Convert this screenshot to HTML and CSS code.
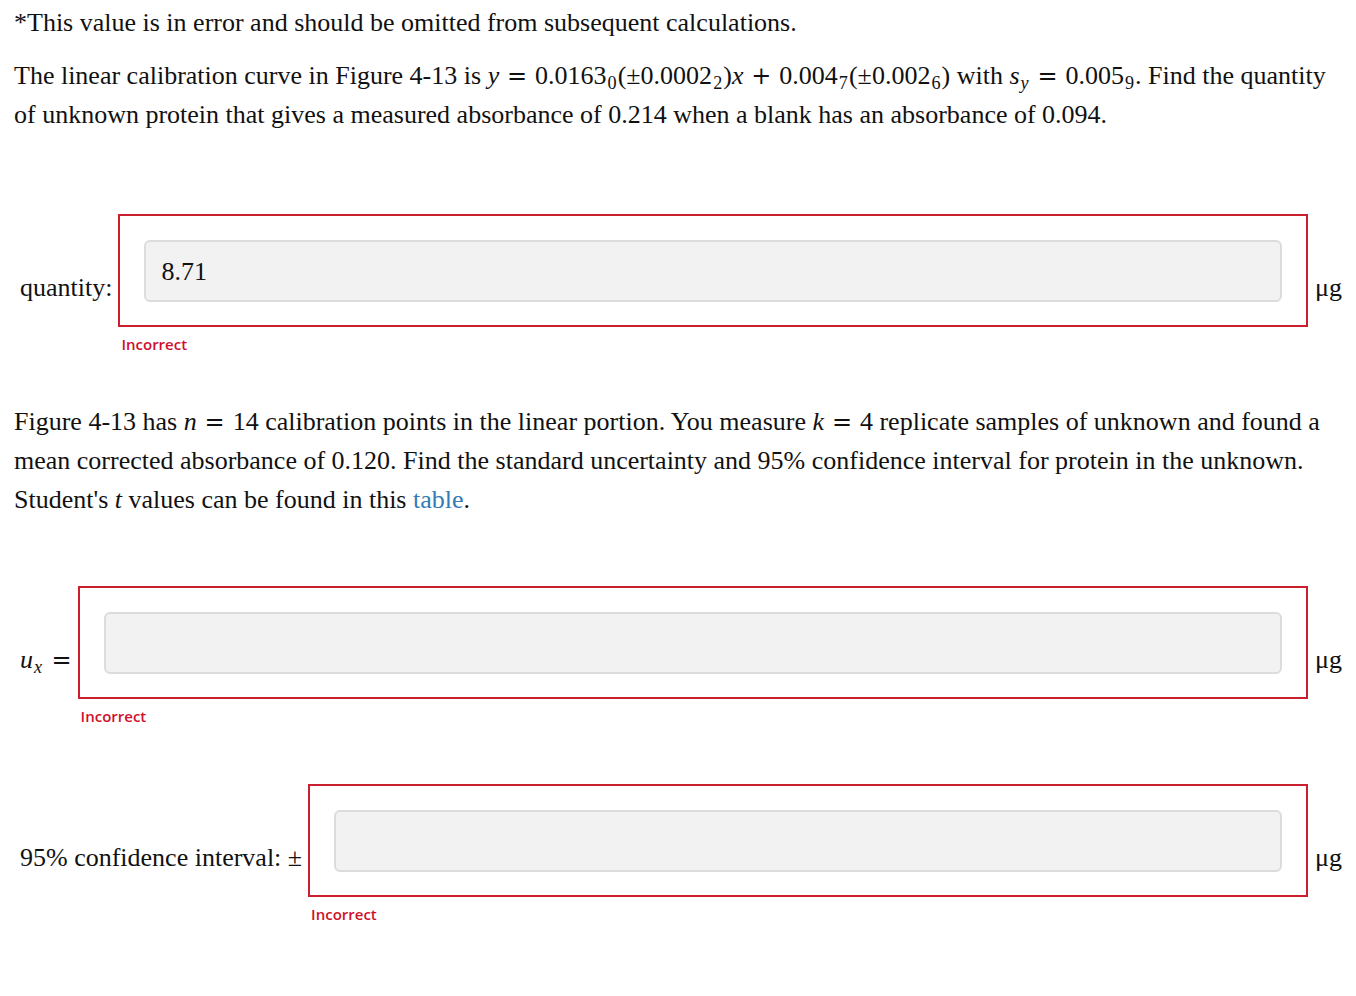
FILE: index.html
```html
<!DOCTYPE html>
<html>
<head>
<meta charset="utf-8">
<link rel="stylesheet" href="styles.css">
</head>
<body>
<p class="note">*This value is in error and should be omitted from subsequent calculations.</p>
<p class="para">The linear calibration curve in Figure 4-13 is <span class="m"><i>y</i><span class="op">=</span>0.0163<sub>0</sub>(±0.0002<sub>2</sub>)<i>x</i><span class="op">+</span>0.004<sub>7</sub>(±0.002<sub>6</sub>)</span> with <span class="m"><i>s</i><sub class="it">y</sub><span class="op">=</span>0.005<sub>9</sub></span>. Find the quantity of unknown protein that gives a measured absorbance of 0.214 when a blank has an absorbance of 0.094.</p>

<div class="question q1">
  <label class="qlabel">quantity:</label>
  <div class="answer-box"><div class="field">8.71</div></div>
  <span class="unit">μg</span>
  <div class="feedback">Incorrect</div>
</div>

<p class="para p3">Figure 4-13 has <i>n</i><span class="op">=</span>14 calibration points in the linear portion. You measure <i>k</i><span class="op">=</span>4 replicate samples of unknown and found a mean corrected absorbance of 0.120. Find the standard uncertainty and 95% confidence interval for protein in the unknown. Student's <i>t</i> values can be found in this <a class="link" href="#">table</a>.</p>

<div class="question q2">
  <label class="qlabel"><i>u</i><sub class="it">x</sub><span class="op">=</span></label>
  <div class="answer-box"><div class="field"></div></div>
  <span class="unit">μg</span>
  <div class="feedback">Incorrect</div>
</div>

<div class="question q3">
  <label class="qlabel">95% confidence interval: ±</label>
  <div class="answer-box"><div class="field"></div></div>
  <span class="unit">μg</span>
  <div class="feedback">Incorrect</div>
</div>
</body>
</html>
```

FILE: styles.css
```css
html, body {
  margin: 0;
  background: #fff;
}
body {
  padding: 3px 14px 0 14px;
  font-family: "Liberation Serif", "Times New Roman", serif;
  font-size: 26px;
  line-height: 39px;
  color: #111;
}
p {
  margin: 0;
}
.note {
  margin-bottom: 14px;
}
i {
  font-style: italic;
}
sub {
  font-size: 0.7em;
  line-height: 0;
  vertical-align: -0.28em;
  padding: 0 1px;
}
sub.it {
  font-style: italic;
}
.op {
  font-family: "DejaVu Serif", serif;
  font-size: 24px;
  line-height: 0;
  margin: 0 0.33em;
}
.link {
  color: #337ab7;
  text-decoration: none;
}
.question {
  display: grid;
  grid-template-columns: auto 1fr auto;
  align-items: center;
}
.q1 { margin-top: 80px; }
.p3 { margin-top: 48px; }
.q2 { margin-top: 67px; }
.q3 { margin-top: 58px; }
.qlabel {
  grid-column: 1;
  grid-row: 1;
  align-self: end;
  margin-bottom: 20px;
  padding-left: 6px;
  margin-right: 6px;
  white-space: nowrap;
}
.qlabel .op {
  margin-right: 0;
  margin-left: 0.35em;
}
.answer-box {
  grid-column: 2;
  grid-row: 1;
  border: 2px solid #cc1f2d;
  padding: 24px 24px 23px 24px;
}
.field {
  box-sizing: border-box;
  height: 62px;
  background: #f2f2f2;
  border: 2px solid #dcdcdc;
  border-radius: 6px;
  padding: 0 15px;
  display: flex;
  align-items: center;
  font-size: 26px;
}
.unit {
  grid-column: 3;
  grid-row: 1;
  align-self: end;
  margin-bottom: 20px;
  margin-left: 7px;
}
.feedback {
  grid-column: 2;
  grid-row: 2;
  margin-top: 7px;
  padding-left: 3px;
  font-family: "Open Sans", sans-serif;
  font-weight: 600;
  font-size: 15px;
  line-height: 20px;
  color: #d0102a;
}
```
